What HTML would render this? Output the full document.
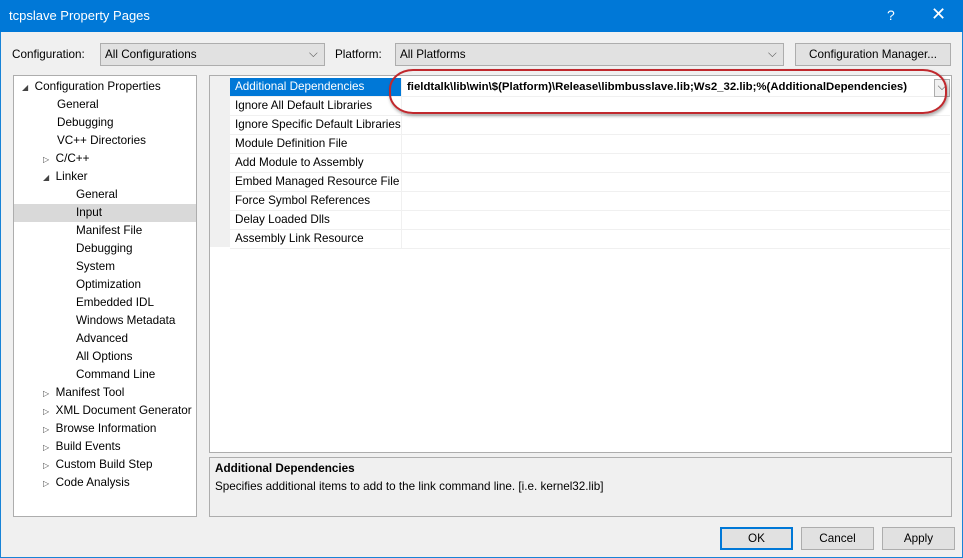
<!DOCTYPE html><html><head><style>
*{margin:0;padding:0;box-sizing:border-box}
body{width:963px;height:558px;background:#f0f0f0;font-family:"Liberation Sans",sans-serif;font-size:11.7px;color:#000;position:relative;overflow:hidden;border:1px solid #1883d7}
.a{position:absolute;white-space:nowrap}
.title{left:-1px;top:-1px;width:963px;height:32px;background:#0078d7;color:#fff;font-size:13px}
.box{border:1px solid #adadad;background:#e1e1e1}
.t{position:absolute;white-space:nowrap;line-height:18px}
.r{position:absolute;left:20px;width:720px;height:19px;border-bottom:1px solid #f0f0f0;line-height:18px}
.r span{display:inline-block;width:172px;padding-left:5px;border-right:1px solid #f0f0f0;height:18px}
.tri{font-size:8px;color:#444}
.btn{position:absolute;border:1px solid #adadad;background:#e1e1e1;text-align:center;line-height:21px;height:23px}
</style></head><body>
<div class="a title"><span class="a" style="left:9px;top:8px">tcpslave Property Pages</span><span class="a" style="left:887px;top:7px;font-size:14px">?</span><span class="a" style="left:931px;top:4px;font-size:18px">✕</span></div>
<span class="a" style="left:11px;top:47px">Configuration:</span>
<div class="a box" style="left:99px;top:42px;width:225px;height:23px"><span class="a" style="left:4px;top:4px">All Configurations</span><span class="a" style="left:208px;top:3px;color:#555">⌵</span></div>
<span class="a" style="left:334px;top:47px">Platform:</span>
<div class="a box" style="left:394px;top:42px;width:389px;height:23px"><span class="a" style="left:4px;top:4px">All Platforms</span><span class="a" style="left:372px;top:3px;color:#555">⌵</span></div>
<div class="btn" style="left:794px;top:42px;width:156px">Configuration Manager...</div>
<div class="a" style="left:12px;top:74px;width:184px;height:442px;background:#fff;border:1px solid #adadad">
<div class="a" style="left:0;top:128px;width:182px;height:18px;background:#d9d9d9"></div>
<div class="t" style="left:8px;top:2px"><span class="tri">◢</span>&nbsp; Configuration Properties</div>
<div class="t" style="left:43px;top:20px">General</div>
<div class="t" style="left:43px;top:38px">Debugging</div>
<div class="t" style="left:43px;top:56px">VC++ Directories</div>
<div class="t" style="left:29px;top:74px"><span class="tri">▷</span>&nbsp; C/C++</div>
<div class="t" style="left:29px;top:92px"><span class="tri">◢</span>&nbsp; Linker</div>
<div class="t" style="left:62px;top:110px">General</div>
<div class="t" style="left:62px;top:128px">Input</div>
<div class="t" style="left:62px;top:146px">Manifest File</div>
<div class="t" style="left:62px;top:164px">Debugging</div>
<div class="t" style="left:62px;top:182px">System</div>
<div class="t" style="left:62px;top:200px">Optimization</div>
<div class="t" style="left:62px;top:218px">Embedded IDL</div>
<div class="t" style="left:62px;top:236px">Windows Metadata</div>
<div class="t" style="left:62px;top:254px">Advanced</div>
<div class="t" style="left:62px;top:272px">All Options</div>
<div class="t" style="left:62px;top:290px">Command Line</div>
<div class="t" style="left:29px;top:308px"><span class="tri">▷</span>&nbsp; Manifest Tool</div>
<div class="t" style="left:29px;top:326px"><span class="tri">▷</span>&nbsp; XML Document Generator</div>
<div class="t" style="left:29px;top:344px"><span class="tri">▷</span>&nbsp; Browse Information</div>
<div class="t" style="left:29px;top:362px"><span class="tri">▷</span>&nbsp; Build Events</div>
<div class="t" style="left:29px;top:380px"><span class="tri">▷</span>&nbsp; Custom Build Step</div>
<div class="t" style="left:29px;top:398px"><span class="tri">▷</span>&nbsp; Code Analysis</div>
</div>
<div class="a" style="left:208px;top:74px;width:743px;height:378px;background:#fff;border:1px solid #adadad">
<div class="a" style="left:0;top:0;width:20px;height:171px;background:#f0f0f0"></div>
<div class="r" style="top:2px"><span style="background:#0078d7;color:#fff">Additional Dependencies</span><b class="a" style="left:177px;top:0;font-size:11.4px">fieldtalk\lib\win\$(Platform)\Release\libmbusslave.lib;Ws2_32.lib;%(AdditionalDependencies)</b></div>
<div class="r" style="top:21px"><span>Ignore All Default Libraries</span></div>
<div class="r" style="top:40px"><span>Ignore Specific Default Libraries</span></div>
<div class="r" style="top:59px"><span>Module Definition File</span></div>
<div class="r" style="top:78px"><span>Add Module to Assembly</span></div>
<div class="r" style="top:97px"><span>Embed Managed Resource File</span></div>
<div class="r" style="top:116px"><span>Force Symbol References</span></div>
<div class="r" style="top:135px"><span>Delay Loaded Dlls</span></div>
<div class="r" style="top:154px"><span>Assembly Link Resource</span></div>
<div class="a" style="left:724px;top:3px;width:16px;height:18px;border:1px solid #adadad;background:#f0f0f0;color:#555;text-align:center;line-height:14px">⌵</div>
<div class="a" style="left:179px;top:-7px;width:558px;height:45px;border:2px solid #c0282d;border-radius:24px/20px;box-shadow:1px 2px 3px rgba(0,0,0,.35)"></div>
</div>
<div class="a" style="left:208px;top:456px;width:743px;height:60px;border:1px solid #adadad;background:#f0f0f0">
<b class="a" style="left:5px;top:4px">Additional Dependencies</b>
<span class="a" style="left:5px;top:22px">Specifies additional items to add to the link command line. [i.e. kernel32.lib]</span></div>
<div class="btn" style="left:719px;top:526px;width:73px;border:2px solid #0078d7;line-height:19px">OK</div>
<div class="btn" style="left:800px;top:526px;width:73px">Cancel</div>
<div class="btn" style="left:881px;top:526px;width:73px">Apply</div>
</body></html>
